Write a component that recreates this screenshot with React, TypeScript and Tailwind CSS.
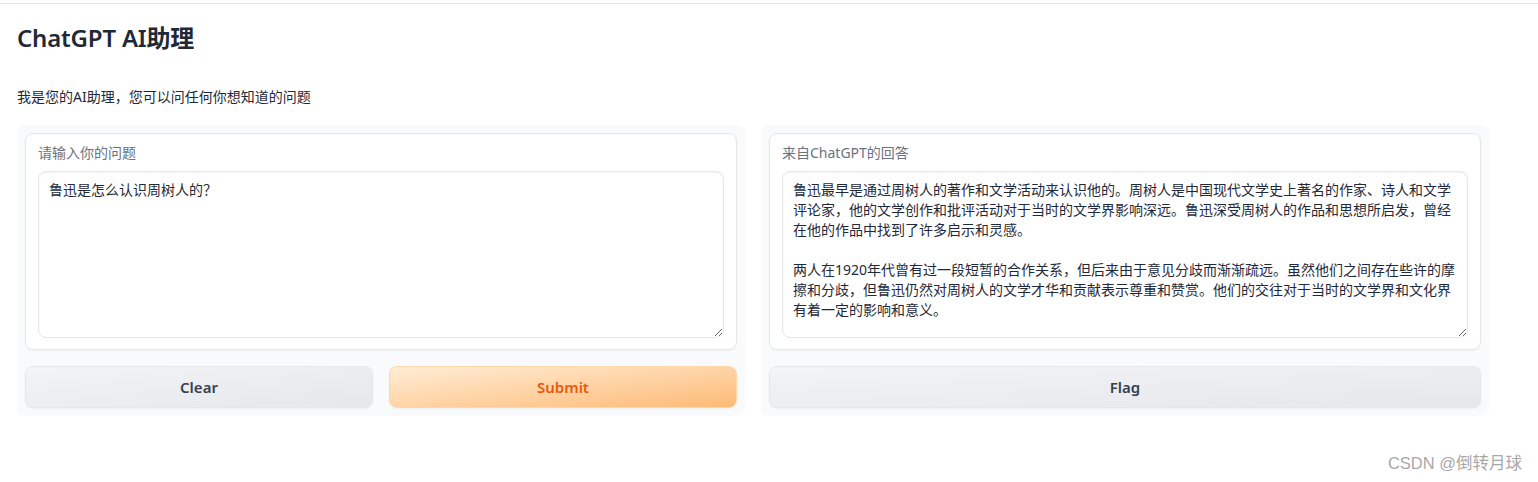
import React from "react";

// ─────────────────────────────────────────────────────────────────────────────
// Data
// ─────────────────────────────────────────────────────────────────────────────

const QUESTION = "鲁迅是怎么认识周树人的？";

const ANSWER =
  "鲁迅最早是通过周树人的著作和文学活动来认识他的。周树人是中国现代文学史上著名的作家、诗人和文学评论家，他的文学创作和批评活动对于当时的文学界影响深远。鲁迅深受周树人的作品和思想所启发，曾经在他的作品中找到了许多启示和灵感。\n\n" +
  "两人在1920年代曾有过一段短暂的合作关系，但后来由于意见分歧而渐渐疏远。虽然他们之间存在些许的摩擦和分歧，但鲁迅仍然对周树人的文学才华和贡献表示尊重和赞赏。他们的交往对于当时的文学界和文化界有着一定的影响和意义。";

// ─────────────────────────────────────────────────────────────────────────────
// Pieces
// ─────────────────────────────────────────────────────────────────────────────

function TextBlock({ label, value }: { label: string; value: string }) {
  return (
    <div className="rounded-lg border border-[#e5e7eb] bg-white pt-[9px] px-3 pb-[11px] shadow-[0_1px_2px_rgba(0,0,0,0.04)]">
      <div className="text-[14px] leading-[20px] text-[#6b7280]">{label}</div>
      <textarea
        readOnly
        defaultValue={value}
        className="mt-2 block h-[167px] w-full resize-y rounded-lg border border-[#e5e7eb] bg-white px-[10px] pt-[8px] text-[14px] leading-[20px] text-[#1f2937] shadow-[inset_0_1px_2px_rgba(0,0,0,0.05)] outline-none"
      />
    </div>
  );
}

function Btn({ label, kind }: { label: string; kind: "secondary" | "primary" }) {
  const cls =
    kind === "primary"
      ? "border-[#fed7aa] bg-gradient-to-br from-[#ffedd5] to-[#fdba74] text-[#ea580c]"
      : "border-[#e5e7eb] bg-gradient-to-br from-[#f3f4f6] to-[#e5e7eb] text-[#374151]";
  return (
    <button className={`h-[42px] flex-1 rounded-lg border text-[15px] font-semibold shadow-[0_1px_2px_rgba(0,0,0,0.05)] ${cls}`}>
      {label}
    </button>
  );
}

// ─────────────────────────────────────────────────────────────────────────────
// App
// ─────────────────────────────────────────────────────────────────────────────

export default function App() {
  return (
    <div
      className="relative h-[482px] w-[1538px] overflow-hidden bg-white text-[#1f2937]"
      style={{ fontFamily: '"Noto Sans", "Noto Sans CJK SC", sans-serif' }}
    >
      <div className="mt-[3px] border-t border-[#e5e7eb]" />

      <div className="px-[17px]">
        <h1 className="mt-[18px] text-[24px] font-semibold leading-[32px] tracking-[-0.2px] text-[#1f2937]">ChatGPT AI助理</h1>
        <p className="mt-[33px] text-[14px] leading-[20px] text-[#1f2937]">我是您的AI助理，您可以问任何你想知道的问题</p>

        <div className="mt-[18px] flex gap-4">
          {/* Input column */}
          <div className="w-[728px] rounded-lg bg-[#f9fafb] p-2">
            <TextBlock label="请输入你的问题" value={QUESTION} />
            <div className="mt-4 flex gap-4">
              <Btn label="Clear" kind="secondary" />
              <Btn label="Submit" kind="primary" />
            </div>
          </div>

          {/* Output column */}
          <div className="w-[728px] rounded-lg bg-[#f9fafb] p-2">
            <TextBlock label="来自ChatGPT的回答" value={ANSWER} />
            <div className="mt-4 flex gap-4">
              <Btn label="Flag" kind="secondary" />
            </div>
          </div>
        </div>
      </div>

      {/* Watermark */}
      <div
        className="absolute right-[16px] top-[452px] text-[16.5px] leading-[22px] text-[#a8a8a8]"
        style={{ fontFamily: '"Liberation Sans", "Noto Sans CJK SC", sans-serif' }}
      >
        CSDN @倒转月球
      </div>
    </div>
  );
}
